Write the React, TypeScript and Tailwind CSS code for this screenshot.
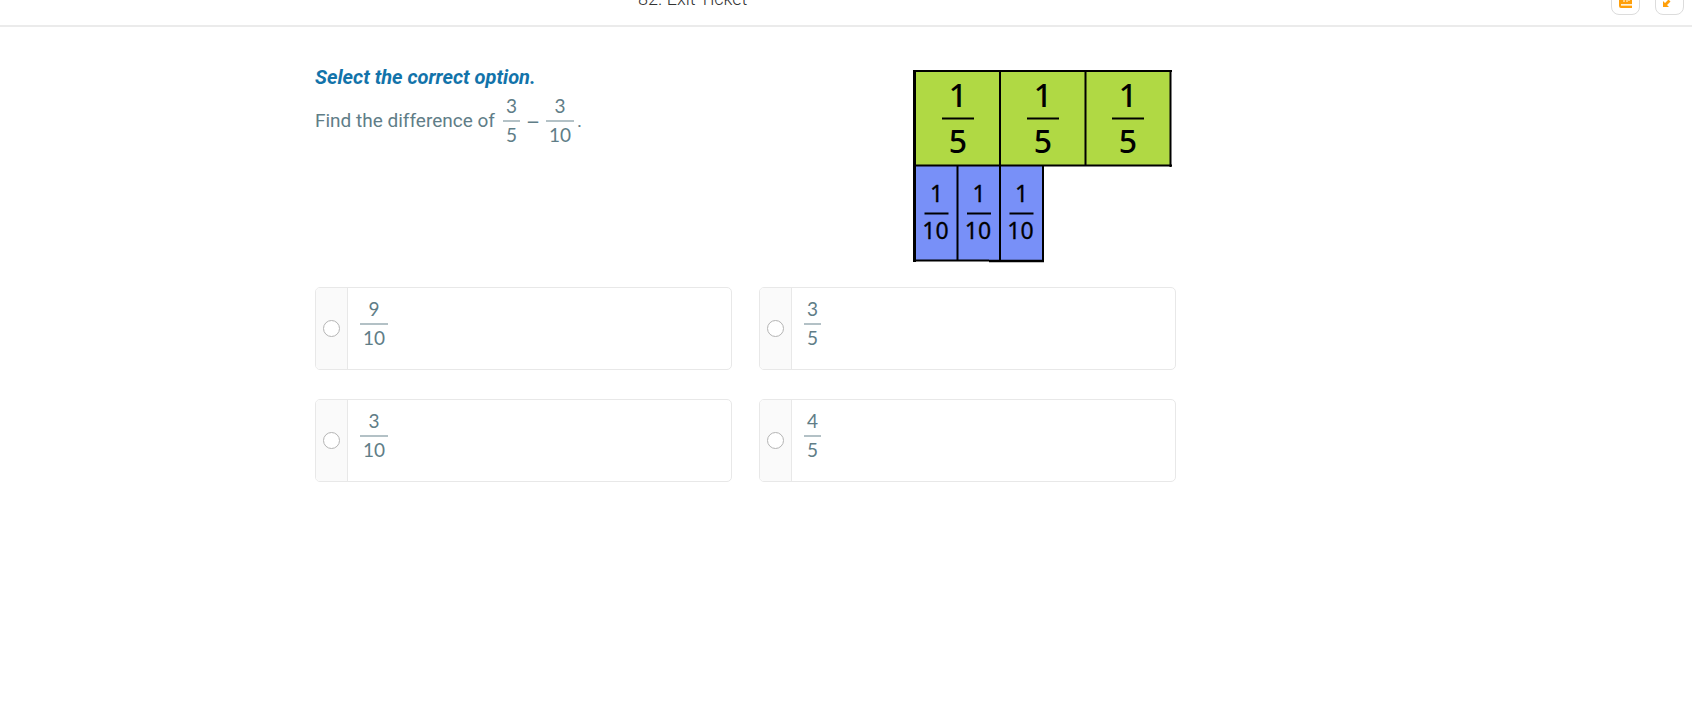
import React from "react";

type FractionProps = { top: number; bottom: number };

function Fraction({ top, bottom }: FractionProps) {
  return (
    <span className="inline-flex flex-col items-stretch text-center align-middle font-['Lato',sans-serif] text-[19px] font-normal leading-7 text-[#607d87]">
      <span className="border-b-2 border-[#b3c1c6] px-[3px]">{top}</span>
      <span className="-mt-px px-[3px]">{bottom}</span>
    </span>
  );
}

function Option({ top, bottom }: FractionProps) {
  return (
    <label className="flex min-h-[83px] cursor-pointer overflow-hidden rounded-[5px] border border-[#e8e8e8] bg-white">
      <span className="flex w-8 shrink-0 items-center justify-center border-r border-[#e8e8e8] bg-[#fafafa]">
        <input
          type="radio"
          name="answer"
          aria-label={`${top}/${bottom}`}
          className="size-[17px] appearance-none rounded-full border border-[#b4b4b4] bg-white checked:border-[#1273aa] checked:bg-[#1273aa]"
        />
      </span>
      <span className="px-3 py-[7px]">
        <Fraction top={top} bottom={bottom} />
      </span>
    </label>
  );
}

function FractionModel() {
  return (
    <svg
      viewBox="0 0 259 193"
      className="block w-[259px]"
      role="img"
      aria-label="Three one-fifth tiles above three one-tenth tiles"
      fontFamily="'Noto Sans', sans-serif"
      fontWeight="500"
      textAnchor="middle"
    >
      <rect x="1" y="1" width="257" height="95" fill="#b0d944" />
      <rect x="1" y="96" width="129" height="95" fill="#7890f8" />
      <path
        d="M0 1H259M0 95.500H259M0 190.500H76M87 1V192M172.500 1V96M257.500 0V97M44.500 96V191M130 96V192"
        stroke="#000"
        strokeWidth="2"
        fill="none"
      />
      <path d="M76 191H131" stroke="#000" strokeWidth="2.500" />
      <path d="M1.500 0V192" stroke="#000" strokeWidth="3" />
      {[45, 130, 215].map((x) => (
        <g key={x} fontSize="32">
          <text x={x} y="37">1</text>
          <path d={`M${x - 16} 48.500H${x + 16}`} stroke="#000" strokeWidth="2" />
          <text x={x} y="83">5</text>
        </g>
      ))}
      {[23.5, 66, 108.5].map((x) => (
        <g key={x} fontSize="23" fontWeight="400" stroke="#000" strokeWidth="0.300">
          <text x={x} y="132">1</text>
          <path d={`M${x - 12} 143.500H${x + 12}`} strokeWidth="2" />
          <text x={x - 1} y="169">10</text>
        </g>
      ))}
    </svg>
  );
}

const toolButton =
  "flex h-[30px] w-[29px] items-center justify-center rounded-lg border border-[#dcdcdc] bg-white";

export default function App() {
  return (
    <div className="min-h-screen bg-white font-['Roboto',sans-serif] text-[#607d87]">
      <header className="grid h-[27px] grid-cols-[1fr_auto] overflow-hidden border-b-2 border-[#ebebeb] pr-2">
        <h1 className="-mt-[13px] pl-[638px] text-lg font-light leading-6 text-[#333]">82. Exit Ticket</h1>
        <div className="-mt-[15px] flex gap-[15px]">
          <button type="button" aria-label="Reference book" className={toolButton}>
            <svg viewBox="0 0 14 16" className="h-4 w-[14px]" aria-hidden="true">
              <path d="M1 0H13V12H2V13.500H13V16H2Q0 16 0 14V1Z" fill="#ff9f0a" />
              <path d="M4 9H6M8 8V10M10 8V9" stroke="#fff" strokeWidth="1" />
              <path d="M2 13H13" stroke="#ffe0ac" strokeWidth="1" />
            </svg>
          </button>
          <button type="button" aria-label="Full screen" className={toolButton}>
            <svg viewBox="0 0 18 18" className="size-[18px]" aria-hidden="true">
              <path
                d="M11 1H17V7L15 5L11 9L9 7L13 3ZM2 10L4 12L7.500 8.500L9.500 10.500L6 14L8 16H2Z"
                fill="#ff9f0a"
              />
            </svg>
          </button>
        </div>
      </header>

      <main className="ml-[315px] mr-4 max-w-[861px] pb-10 pt-[43px]">
        <div className="flex items-start justify-between pr-1">
          <div className="-mt-[5px]">
            <h2 className="text-xl font-bold italic leading-6 text-[#1273aa]">Select the correct option.</h2>
            <p className="mt-[3px] flex items-center text-[19px] leading-7">
              <span className="mr-2">Find the difference of</span>
              <Fraction top={3} bottom={5} />
              <span className="mx-[5px] w-4 text-center font-['Noto_Sans',sans-serif] text-[22px]">−</span>
              <Fraction top={3} bottom={10} />
              <span className="ml-[3px]">.</span>
            </p>
          </div>
          <FractionModel />
        </div>

        <div
          role="radiogroup"
          aria-label="Answer options"
          className="mt-6 grid grid-cols-2 gap-x-[27px] gap-y-[29px]"
        >
          <Option top={9} bottom={10} />
          <Option top={3} bottom={5} />
          <Option top={3} bottom={10} />
          <Option top={4} bottom={5} />
        </div>
      </main>
    </div>
  );
}
